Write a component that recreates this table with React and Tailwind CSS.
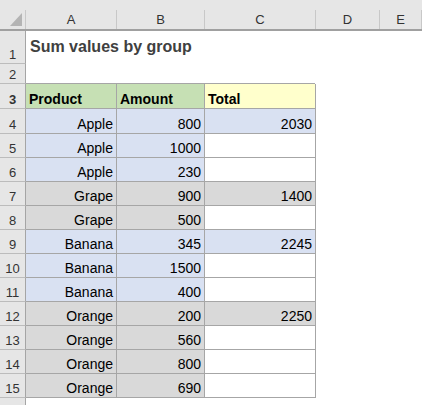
import React from "react";

const groups = [
  { n: 4, p: "Apple", a: 800, t: 2030, bg: "bg-[#d9e1f2]" },
  { n: 5, p: "Apple", a: 1000, bg: "bg-[#d9e1f2]" },
  { n: 6, p: "Apple", a: 230, bg: "bg-[#d9e1f2]" },
  { n: 7, p: "Grape", a: 900, t: 1400, bg: "bg-[#d9d9d9]" },
  { n: 8, p: "Grape", a: 500, bg: "bg-[#d9d9d9]" },
  { n: 9, p: "Banana", a: 345, t: 2245, bg: "bg-[#d9e1f2]" },
  { n: 10, p: "Banana", a: 1500, bg: "bg-[#d9e1f2]" },
  { n: 11, p: "Banana", a: 400, bg: "bg-[#d9e1f2]" },
  { n: 12, p: "Orange", a: 200, t: 2250, bg: "bg-[#d9d9d9]" },
  { n: 13, p: "Orange", a: 560, bg: "bg-[#d9d9d9]" },
  { n: 14, p: "Orange", a: 800, bg: "bg-[#d9d9d9]" },
  { n: 15, p: "Orange", a: 690, bg: "bg-[#d9d9d9]" },
];

// column header cell with the short light divider on its right
const ColHead = ({ label, className }) => (
  <div className={`flex h-full ${className}`}>
    <div className="flex-1 pt-[12px] text-center text-[13px] leading-[15px] text-[#333]">
      {label}
    </div>
    <div className="w-px h-[19px] self-end bg-[#c8c8c8]" />
  </div>
);

const RowHead = ({ n }) => (
  <div className="w-[26px] shrink-0 flex items-end justify-center pb-[1px] bg-[#e6e6e6] border-r border-b border-r-[#a5a5a5] border-b-[#bcbcbc] text-[13px] leading-[15px] text-[#333]">
    {n}
  </div>
);

const cell = "flex items-end px-[3px] pb-[1px] border-r border-b border-[#a6a6a6] text-[14px] leading-[16px] whitespace-nowrap";

const App = () => {
  return (
    <div className="w-[422px] h-[405px] overflow-hidden bg-white text-black font-['Liberation_Sans',Arial,sans-serif]">
      {/* column headers */}
      <div className="flex h-[31px] bg-[#e6e6e6] border-b-2 border-[#a0a0a0]">
        <div className="w-[26px] shrink-0 flex h-full">
          <svg width="25" height="29" viewBox="0 0 25 29" className="shrink-0">
            <polygon points="22,13 22,26 10,26" fill="#b4b4b4" />
          </svg>
          <div className="w-px h-[19px] self-end bg-[#c8c8c8]" />
        </div>
        <ColHead label="A" className="w-[91px]" />
        <ColHead label="B" className="w-[88px]" />
        <ColHead label="C" className="w-[111px]" />
        <ColHead label="D" className="w-[64px]" />
        <ColHead label="E" className="flex-1" />
      </div>

      {/* row 1: title */}
      <div className="flex h-[33px]">
        <RowHead n={1} />
        <div className="flex-1 pl-[4px] pt-[6px] text-[16px] leading-[20px] font-bold text-[#404040] whitespace-nowrap">
          Sum values by group
        </div>
      </div>

      {/* row 2 */}
      <div className="flex h-[20px]">
        <RowHead n={2} />
        <div className="w-[91px] border-b border-[#a6a6a6]" />
        <div className="w-[88px] border-b border-[#a6a6a6]" />
        <div className="w-[110px] border-b border-[#a6a6a6]" />
        <div className="flex-1" />
      </div>

      {/* row 3: table header */}
      <div className="flex h-[25px] font-bold">
        <RowHead n={3} />
        <div className={`${cell} w-[91px] bg-[#c6e0b4]`}>Product</div>
        <div className={`${cell} w-[88px] bg-[#c6e0b4]`}>Amount</div>
        <div className={`${cell} w-[111px] bg-[#ffffcc]`}>Total</div>
        <div className="flex-1" />
      </div>

      {groups.map((r) => (
        <div key={r.n} className={`flex ${r.n === 4 ? "h-[25px]" : "h-[24px]"}`}>
          <RowHead n={r.n} />
          <div className={`${cell} w-[91px] justify-end ${r.bg}`}>{r.p}</div>
          <div className={`${cell} w-[88px] justify-end ${r.bg}`}>{r.a}</div>
          <div className={`${cell} w-[111px] justify-end ${r.t ? r.bg : "bg-white"}`}>
            {r.t ?? ""}
          </div>
          <div className="flex-1" />
        </div>
      ))}

      {/* row 16, cut off */}
      <div className="flex h-[24px]">
        <RowHead n={16} />
        <div className="flex-1" />
      </div>
    </div>
  );
};

export default App;
